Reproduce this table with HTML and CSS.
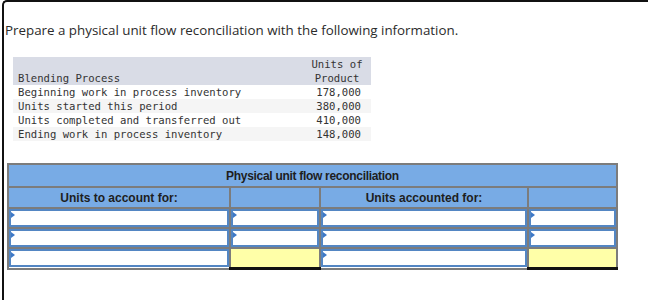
FILE: index.html
```html
<!DOCTYPE html>
<html>
<head>
<meta charset="utf-8">
<link rel="stylesheet" href="styles.css">
</head>
<body>
<div class="frame">
  <p class="prompt">Prepare a physical unit flow reconciliation with the following information.</p>
  <table class="data">
    <colgroup><col class="d1"><col class="d2"></colgroup>
    <thead>
      <tr><th class="lbl">Blending Process</th><th class="num">Units of<br>Product</th></tr>
    </thead>
    <tbody>
      <tr><td class="lbl">Beginning work in process inventory</td><td class="num">178,000</td></tr>
      <tr class="alt"><td class="lbl">Units started this period</td><td class="num">380,000</td></tr>
      <tr><td class="lbl">Units completed and transferred out</td><td class="num">410,000</td></tr>
      <tr class="alt"><td class="lbl">Ending work in process inventory</td><td class="num">148,000</td></tr>
    </tbody>
  </table>
  <table class="recon">
    <colgroup><col class="c1"><col class="c2"><col class="c3"><col class="c4"></colgroup>
    <tr class="h1"><th colspan="4">Physical unit flow reconciliation</th></tr>
    <tr class="h2"><th>Units to account for:</th><th></th><th>Units accounted for:</th><th></th></tr>
    <tr class="row">
      <td><div class="inp"><span class="flag"></span></div></td>
      <td><div class="inp"><span class="flag"></span></div></td>
      <td><div class="inp"><span class="flag"></span></div></td>
      <td><div class="inp"><span class="flag"></span></div></td>
    </tr>
    <tr class="row">
      <td><div class="inp"><span class="flag"></span></div></td>
      <td><div class="inp"><span class="flag"></span></div></td>
      <td><div class="inp"><span class="flag"></span></div></td>
      <td><div class="inp"><span class="flag"></span></div></td>
    </tr>
    <tr class="row last">
      <td><div class="inp"><span class="flag"></span></div></td>
      <td class="total"></td>
      <td><div class="inp"><span class="flag"></span></div></td>
      <td class="total"></td>
    </tr>
  </table>
</div>
</body>
</html>
```

FILE: styles.css
```css
html, body {
  margin: 0;
  padding: 0;
  background: #fff;
  overflow: hidden;
}
.frame {
  margin-left: 2px;
  width: 700px;
  height: 320px;
  border-top: 2px solid #111;
  border-left: 2px solid #111;
  border-top-left-radius: 5px;
  box-sizing: border-box;
  padding-top: 20px;
  font-family: "Liberation Sans", Arial, sans-serif;
  color: #222;
}
.prompt {
  margin: 0 0 0 1px;
  font-family: "Open Sans", "Liberation Sans", sans-serif;
  font-size: 13.35px;
  line-height: 16px;
  color: #2b2b2b;
}
.data {
  border-collapse: collapse;
  table-layout: fixed;
  margin: 19px 0 0 9px;
  width: 358px;
  font-family: "DejaVu Sans Mono", "Liberation Mono", monospace;
  font-size: 10.6px;
  color: #333;
  white-space: nowrap;
}
.data .d1 { width: 290px; }
.data .d2 { width: 68px; }
.data thead tr {
  background: #d9dce6;
}
.data th {
  font-weight: normal;
  line-height: 14px;
  vertical-align: bottom;
  padding: 0;
}
.data td {
  line-height: 14px;
  padding: 0;
}
.data .lbl {
  text-align: left;
  padding-left: 5px;
}
.data td.num {
  text-align: right;
  padding-right: 10px;
}
.data th.num {
  text-align: center;
}
.data tr.alt {
  background: #f5f5f5;
}
.recon {
  border-collapse: collapse;
  table-layout: fixed;
  margin: 22px 0 0 3px;
  width: 609px;
  font-family: "Liberation Sans", Arial, sans-serif;
  font-size: 12px;
  color: #1e1e1e;
}
.recon .c1 { width: 222px; }
.recon .c2 { width: 90px; }
.recon .c3 { width: 208px; }
.recon .c4 { width: 89px; }
.recon th {
  background: #78abe5;
  border: 2px solid #7c7c7c;
  font-weight: bold;
  text-align: center;
  padding: 0;
}
.recon tr.h1 th {
  height: 21px;
  letter-spacing: -0.3px;
}
.recon tr.h2 th {
  height: 19px;
}
.recon td {
  border: 2px solid #7c7c7c;
  padding: 0;
  height: 18px;
  background: #fff;
}
.inp {
  position: relative;
  height: 14px;
  border: 2px solid #5386c3;
  background: #fff;
}
.flag {
  position: absolute;
  left: 0;
  top: 1px;
  width: 0;
  height: 0;
  border-top: 3px solid transparent;
  border-bottom: 3px solid transparent;
  border-left: 4px solid #3d78c6;
}
.recon td.total {
  background: #ffffa8;
  border-top: 2px solid #111;
  border-bottom: 3px solid #111;
}
```
